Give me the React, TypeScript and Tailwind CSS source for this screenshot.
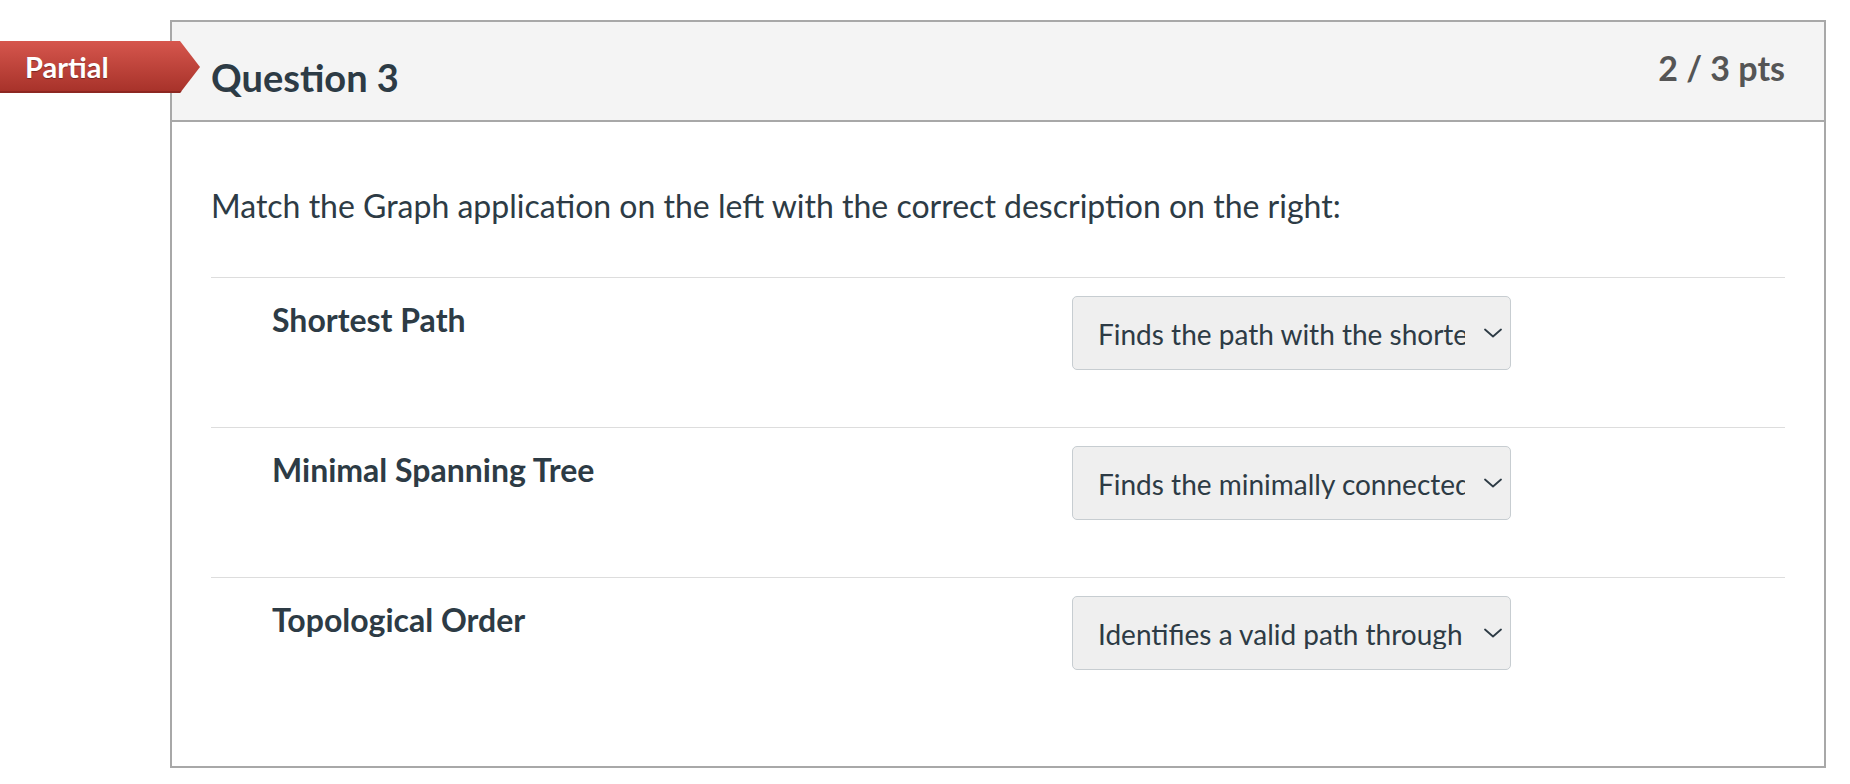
const rows = [
  { label: "Shortest Path", answer: "Finds the path with the shortest total weight between two vertices" },
  { label: "Minimal Spanning Tree", answer: "Finds the minimally connected subgraph of the graph" },
  { label: "Topological Order", answer: "Identifies a valid path through a directed acyclic graph" },
];

function Chevron() {
  return (
    <svg width="18" height="10" viewBox="0 0 18 10" fill="none" className="shrink-0">
      <path d="M1 1.5 L9 8.5 L17 1.5" stroke="#2d3b45" strokeWidth="1.8" strokeLinecap="round" strokeLinejoin="round" />
    </svg>
  );
}

export default function App() {
  return (
    <div className="relative h-[784px] w-full bg-white font-['Lato','Liberation_Sans',sans-serif] text-[#2d3b45]">
      {/* ribbon */}
      <div className="absolute left-0 top-[41px] z-10 h-[52px] w-[200px] bg-gradient-to-b from-[#d6564d] to-[#a63129] [clip-path:polygon(0_0,180px_0,200px_50%,180px_100%,0_100%)]">
        <div className="h-full border-b-2 border-[#8d2822]">
          <span className="block pl-[25px] pt-[11px] text-[29px] font-bold leading-[29px] text-white [text-shadow:0_1px_1px_rgba(0,0,0,0.35)]">
            Partial
          </span>
        </div>
      </div>

      <div className="pl-[170px] pt-[20px]">
        <div className="h-[748px] w-[1656px] border-2 border-[#a8a8a8] bg-white">
          <div className="flex h-[100px] justify-between border-b-2 border-[#a8a8a8] bg-[#f4f4f4] px-[39px]">
            <h3 className="mt-[36px] text-[38px] font-bold leading-[38px]">Question 3</h3>
            <div className="mt-[29px] text-[34px] font-bold leading-[34px] text-[#555]">2 / 3 pts</div>
          </div>

          <div className="px-[39px] pt-[63px]">
            <p className="text-[32px] leading-[42px]">
              Match the Graph application on the left with the correct description on the right:
            </p>

            <div className="mt-[50px]">
              {rows.map((r) => (
                <div key={r.label} className="flex h-[150px] border-t border-[#dddddd]">
                  <div className="w-[861px] pl-[61px] pt-[21px] text-[32px] font-bold leading-[42px]">{r.label}</div>
                  <div className="mt-[18px] flex h-[74px] w-[439px] items-center rounded-[5px] border border-[#c7cdd1] bg-[#efefef] pl-[25px] pr-[8px]">
                    <span className="w-[367px] shrink-0 overflow-hidden whitespace-nowrap pt-[2px] text-[28px] leading-[30px]">
                      {r.answer}
                    </span>
                    <div className="flex-1" />
                    <Chevron />
                  </div>
                </div>
              ))}
            </div>
          </div>
        </div>
      </div>
    </div>
  );
}
